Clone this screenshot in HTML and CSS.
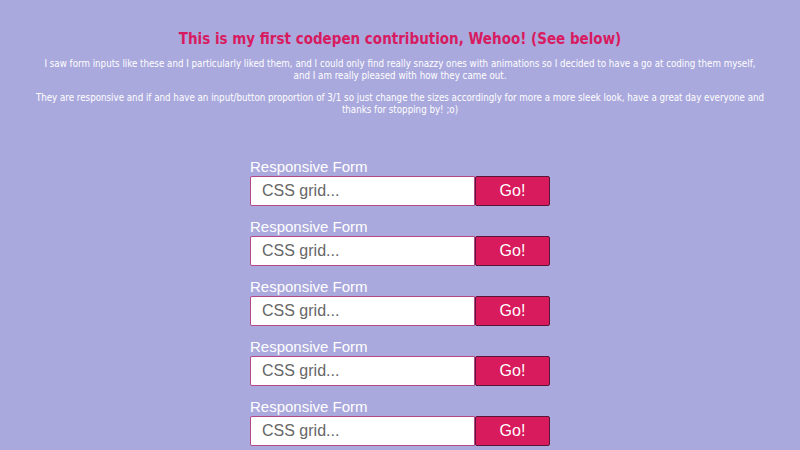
FILE: index.html
```html
<!DOCTYPE html>
<html lang="en">
<head>
    <meta charset="UTF-8">
    <meta name="viewport" content="width=device-width, initial-scale=1.0">
    <title>Responsive Form</title>
    <link rel="stylesheet" href="styles.css">
</head>
<body>
    <div class="intro">
        <h1>This is my first codepen contribution, Wehoo! (See below)</h1>
        <p>I saw form inputs like these and I particularly liked them, and I could only find really snazzy ones with animations so I decided to have a go at coding them myself,<br>and I am really pleased with how they came out.</p>
        <p>They are responsive and if and have an input/button proportion of 3/1 so just change the sizes accordingly for more a more sleek look, have a great day everyone and thanks for stopping by! ;o)</p>
    </div>
    <div class="forms">
        <form class="form">
            <label>Responsive Form</label>
            <div class="row">
                <input type="text" placeholder="CSS grid...">
                <button type="button">Go!</button>
            </div>
        </form>
        <form class="form">
            <label>Responsive Form</label>
            <div class="row">
                <input type="text" placeholder="CSS grid...">
                <button type="button">Go!</button>
            </div>
        </form>
        <form class="form">
            <label>Responsive Form</label>
            <div class="row">
                <input type="text" placeholder="CSS grid...">
                <button type="button">Go!</button>
            </div>
        </form>
        <form class="form">
            <label>Responsive Form</label>
            <div class="row">
                <input type="text" placeholder="CSS grid...">
                <button type="button">Go!</button>
            </div>
        </form>
        <form class="form">
            <label>Responsive Form</label>
            <div class="row">
                <input type="text" placeholder="CSS grid...">
                <button type="button">Go!</button>
            </div>
        </form>
    </div>
</body>
</html>
```

FILE: styles.css
```css
body {
    margin: 0;
    padding: 0;
    background: #aaa9dd;
    font-family: "DejaVu Sans Condensed", "DejaVu Sans", Verdana, sans-serif;
}
.intro {
    text-align: center;
    padding: 30px 30px 0;
    color: #fff;
}
.intro h1 {
    color: #d81b60;
    font-size: 15px;
    margin: 0 0 10px;
}
.intro p {
    font-size: 9.7px;
    line-height: 12px;
    margin: 0 0 10px;
}
.forms {
    display: flex;
    flex-direction: column;
    align-items: center;
    margin-top: 42px;
}
.form {
    width: 300px;
    margin: 0 0 12px;
}
.form label {
    display: block;
    color: #fff;
    font-family: "Liberation Sans", Arial, sans-serif;
    font-size: 15px;
    line-height: 18px;
}
.row {
    display: grid;
    grid-template-columns: 3fr 1fr;
    height: 30px;
}
.row input {
    border: 1px solid #b5488a;
    border-radius: 2px 0 0 2px;
    padding: 0 11px;
    font-family: "Liberation Sans", Arial, sans-serif;
    font-size: 16px;
    color: #555;
    outline: none;
    min-width: 0;
}
.row input::placeholder {
    color: #666;
}
.row button {
    background: #d81b5c;
    border: 1px solid #5c1438;
    border-radius: 2px;
    color: #fff;
    font-family: "Liberation Sans", Arial, sans-serif;
    font-size: 16px;
    padding: 0;
}
```
